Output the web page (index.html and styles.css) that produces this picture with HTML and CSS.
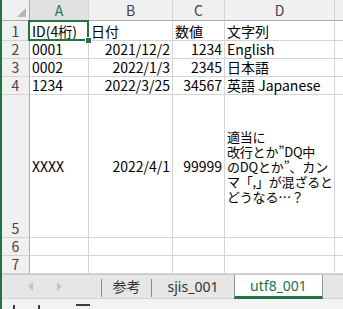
FILE: index.html
```html
<!DOCTYPE html>
<html lang="ja">
<head>
  <meta charset="utf-8">
  <link rel="stylesheet" href="styles.css">
  <title>utf8_001</title>
</head>
<body>
  <div class="app">
    <!-- Sheet grid -->
    <div class="sheet">
      <div class="hdr corner"><span class="tri"></span></div>
      <div class="hdr col sel">A</div>
      <div class="hdr col">B</div>
      <div class="hdr col">C</div>
      <div class="hdr col">D</div>
      <div class="hdr col last"></div>

      <div class="hdr row">1</div>
      <div class="cell active">ID(4桁)</div>
      <div class="cell">日付</div>
      <div class="cell">数値</div>
      <div class="cell">文字列</div>
      <div class="cell last"></div>

      <div class="hdr row">2</div>
      <div class="cell">0001</div>
      <div class="cell num">2021/12/2</div>
      <div class="cell num">1234</div>
      <div class="cell">English</div>
      <div class="cell last"></div>

      <div class="hdr row">3</div>
      <div class="cell">0002</div>
      <div class="cell num">2022/1/3</div>
      <div class="cell num">2345</div>
      <div class="cell">日本語</div>
      <div class="cell last"></div>

      <div class="hdr row">4</div>
      <div class="cell">1234</div>
      <div class="cell num">2022/3/25</div>
      <div class="cell num">34567</div>
      <div class="cell">英語 Japanese</div>
      <div class="cell last"></div>

      <div class="hdr row">5</div>
      <div class="cell mid">XXXX</div>
      <div class="cell mid num">2022/4/1</div>
      <div class="cell mid num">99999</div>
      <div class="cell mid wrap">
        <div class="lines">適当に<br>改行とか”DQ中<br>のDQとか”、カン<br>マ「,」が混ざると<br>どうなる…？</div>
      </div>
      <div class="cell last"></div>

      <div class="hdr row">6</div>
      <div class="cell"></div>
      <div class="cell"></div>
      <div class="cell"></div>
      <div class="cell"></div>
      <div class="cell last"></div>

      <div class="hdr row">7</div>
      <div class="cell"></div>
      <div class="cell"></div>
      <div class="cell"></div>
      <div class="cell"></div>
      <div class="cell last"></div>
    </div>

    <!-- Sheet tabs -->
    <div class="tabbar">
      <div class="arrows">
        <svg width="6" height="9" viewBox="0 0 6 9"><path d="M5 0 L0 4.5 L5 9 Z" fill="#c3c3c3"/></svg>
        <svg width="6" height="9" viewBox="0 0 6 9"><path d="M0 0 L5 4.5 L0 9 Z" fill="#c3c3c3"/></svg>
      </div>
      <div class="sep"></div>
      <div class="tab tab_ref">参考</div>
      <div class="sep"></div>
      <div class="tab tab_sjis">sjis_001</div>
      <div class="tab tab_on">utf8_001</div>
    </div>

    <!-- Status bar (cut off) -->
    <div class="status">
      <span class="mark m1"></span>
      <span class="mark m2"></span>
      <span class="mark m3"></span>
    </div>
  </div>
</body>
</html>
```

FILE: styles.css
```css
body {
  margin: 0px;
  background-color: white;
  font-family: "Noto Sans CJK JP", sans-serif;
}

.app {
  width: 343px;
  height: 309px;
  border-left: 2px solid rgb(33, 115, 70);
  box-sizing: border-box;
  overflow: hidden;
  display: flex;
  flex-direction: column;
}

.sheet {
  display: grid;
  grid-template-columns: 28px 59px 84px 52px 110px 1fr;
  grid-template-rows: 21px 20px 18px 18px 18px 143px 18px 18px;
  border-bottom: 1px solid rgb(200, 200, 200);
}

.sheet > div {
  box-sizing: border-box;
  border-right: 1px solid rgb(212, 212, 212);
  border-bottom: 1px solid rgb(212, 212, 212);
  white-space: nowrap;
  overflow: visible;
}

.hdr {
  background-color: rgb(240, 240, 240);
  color: rgb(68, 68, 68);
  font-size: 14px;
  display: flex;
  justify-content: center;
  line-height: 18px;
}

.col {
  align-items: center;
  border-bottom: 1px solid rgb(171, 171, 171) !important;
}

.col.sel {
  background-color: rgb(225, 225, 225);
  color: rgb(33, 115, 70);
}

.row {
  align-items: flex-end;
  border-right: 1px solid rgb(171, 171, 171) !important;
}

.corner {
  position: relative;
  border-right: 1px solid rgb(171, 171, 171) !important;
  border-bottom: 1px solid rgb(171, 171, 171) !important;
}

.tri {
  position: absolute;
  right: 3px;
  bottom: 3px;
  width: 0;
  height: 0;
  border-left: 9px solid transparent;
  border-bottom: 9px solid rgb(181, 181, 181);
}

.cell {
  font-size: 14px;
  line-height: 17px;
  color: black;
  padding: 0 2px;
  display: flex;
  align-items: flex-end;
}

.cell.num {
  justify-content: flex-end;
}

.cell.mid {
  align-items: center;
}

.cell.wrap {
  padding-left: 2px;
}

.lines {
  font-size: 13px;
  line-height: 15px;
  letter-spacing: -0.2px;
  margin-top: 1px;
}

.last {
  border-right: none !important;
}

.active {
  position: relative;
}

.active::after {
  content: "";
  position: absolute;
  left: -2px;
  top: -1px;
  right: -1px;
  bottom: -1px;
  border: 2px solid rgb(33, 115, 70);
}

.active::before {
  content: "";
  position: absolute;
  right: -4px;
  bottom: -4px;
  width: 5px;
  height: 5px;
  background-color: rgb(33, 115, 70);
  border: 1px solid white;
  z-index: 2;
}

.tabbar {
  height: 24px;
  background-color: rgb(230, 230, 230);
  display: flex;
  align-items: stretch;
  box-sizing: border-box;
  border-bottom: 1px solid rgb(210, 210, 210);
  font-family: "Noto Sans", "Noto Sans CJK JP", sans-serif;
  font-size: 14px;
  color: rgb(51, 51, 51);
}

.arrows {
  width: 99px;
  display: flex;
  align-items: center;
  gap: 23px;
  padding-left: 26px;
  box-sizing: border-box;
}

.sep {
  width: 1px;
  margin: 4px 0 1px 0;
  background-color: rgb(140, 140, 140);
}

.tab {
  display: flex;
  align-items: center;
  justify-content: center;
  padding-bottom: 1px;
}

.tab_ref {
  width: 49px;
  font-family: "Noto Sans CJK JP", sans-serif;
  font-size: 14px;
}

.tab_sjis {
  width: 82px;
}

.tab_on {
  width: 89px;
  background-color: white;
  color: rgb(33, 115, 70);
  border-left: 1px solid rgb(150, 150, 150);
  border-right: 1px solid rgb(150, 150, 150);
  border-bottom: 3px solid rgb(33, 115, 70);
  box-sizing: border-box;
  margin-bottom: -1px;
}

.status {
  flex: 1;
  background-color: rgb(243, 243, 243);
  position: relative;
}

.mark {
  position: absolute;
  background-color: rgb(60, 60, 60);
}

.m1 {
  left: 11px;
  top: 6px;
  width: 2px;
  height: 5px;
}

.m2 {
  left: 36px;
  top: 6px;
  width: 2px;
  height: 5px;
}

.m3 {
  left: 74px;
  top: 5px;
  width: 14px;
  height: 2px;
}
```
